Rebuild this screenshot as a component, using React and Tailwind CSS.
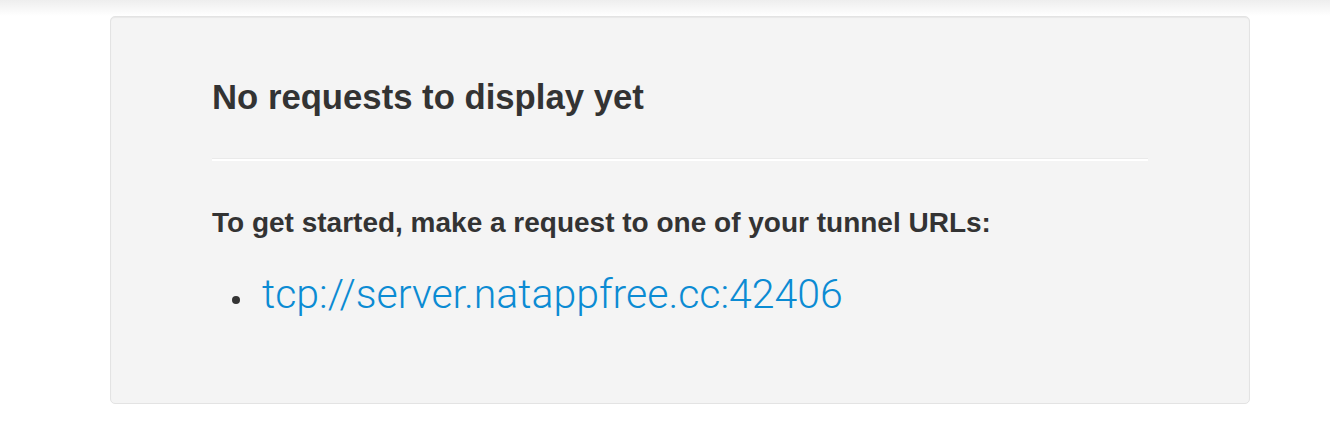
import React from 'react';

const tunnels = ['tcp://server.natappfree.cc:42406'];

function App() {
  return (
    <div className="min-h-[430px] bg-white text-[#333] font-['Liberation_Sans',Arial,sans-serif]">
      {/* navbar shadow */}
      <div className="h-4 bg-gradient-to-b from-[#eeeeee] to-white" />

      <div className="w-[1140px] ml-[110px] rounded-[5px] border border-[#e3e3e3] bg-[#f4f4f4] shadow-[inset_0_1px_1px_rgba(0,0,0,0.05)] px-[101px] pt-[61px] pb-[87px]">
        <h2 className="text-[34.7px] leading-[39px] font-bold">No requests to display yet</h2>

        <hr className="mt-[41px] border-0 border-t border-t-[#eaeaea] border-b-2 border-b-white" />

        <h4 className="mt-[46px] text-[28px] leading-[31px] font-bold">
          To get started, make a request to one of your tunnel URLs:
        </h4>

        <ul className="mt-[34px]">
          {tunnels.map((url) => (
            <li key={url} className="flex items-center">
              <span className="ml-[20px] mr-[22px] mt-[12px] w-[8px] h-[8px] rounded-full bg-[#333]" />
              <a
                href="#"
                className="text-[41px] leading-[44px] font-light text-[#0b8bd3] font-['Roboto',sans-serif]"
              >
                {url}
              </a>
            </li>
          ))}
        </ul>
      </div>
    </div>
  );
}

export default App;
